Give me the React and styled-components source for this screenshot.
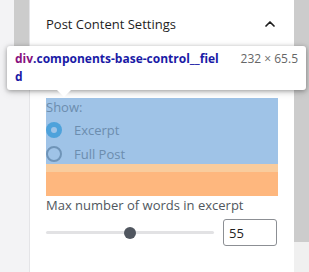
import styled, { createGlobalStyle } from "styled-components"

const Global = createGlobalStyle`
  html, body { margin: 0; padding: 0; }
  body {
    width: 309px;
    height: 272px;
    overflow: hidden;
    font-family: "Open Sans", "Noto Sans", sans-serif;
    background: #f3f3f5;
  }
`

const Page = styled.div`
  position: relative;
  display: flex;
  width: 309px;
  height: 272px;
`

const Gutter = styled.div`
  width: 29px;
  display: flex;
  justify-content: flex-end;
  background: #f3f3f5;
`

const GutterStrip = styled.div`
  width: 15px;
  height: 50px;
  background: #cccccc;
`

const Panel = styled.div`
  flex: 1;
  background: #fff;
  border-left: 1px solid #e4e4e7;
  padding: 0 16px 0 16px;
  display: flex;
  flex-direction: column;
`

const Scrollbar = styled.div`
  width: 15px;
  display: flex;
  flex-direction: column;
`

const ScrollThumb = styled.div`
  height: 242px;
  background: #cccccc;
`

const ScrollTrack = styled.div`
  flex: 1;
  background: #f0f0f0;
`

const Header = styled.div`
  height: 48px;
  display: flex;
  align-items: center;
  justify-content: space-between;
  font-size: 13px;
  color: #1e1e1e;
`

const Spacer = styled.div`
  height: 50px;
`

const Field = styled.div`
  height: 66px;
  background: #9fc3e7;
  display: flex;
  flex-direction: column;
`

const Legend = styled.div`
  height: 20px;
  flex-shrink: 0;
  line-height: 18px;
  font-size: 13px;
  color: #6c8dae;
`

const RadioRow = styled.div`
  height: 24px;
  flex-shrink: 0;
  display: flex;
  align-items: center;
  gap: 12px;
  font-size: 13px;
  color: #6c8dae;
`

const Radio = styled.span`
  width: 16px;
  height: 16px;
  box-sizing: border-box;
  border-radius: 50%;
  border: ${(p) => (p.checked ? "none" : "2px solid #6f94b8")};
  background: ${(p) => (p.checked ? "#4ea2db" : "transparent")};
  display: flex;
  align-items: center;
  justify-content: center;
  &::after {
    content: "";
    display: ${(p) => (p.checked ? "block" : "none")};
    width: 6px;
    height: 6px;
    border-radius: 50%;
    background: #9fc3e7;
  }
`

const Margin = styled.div`
  height: 32px;
  display: flex;
  flex-direction: column;
`

const MarginTop = styled.div`
  height: 8px;
  background: #f9cc9d;
`

const MarginRest = styled.div`
  flex: 1;
  background: #feb77e;
`

const Label = styled.div`
  height: 18px;
  line-height: 18px;
  font-size: 13px;
  color: #50575e;
`

const SliderRow = styled.div`
  margin-top: 5px;
  display: flex;
  align-items: center;
  gap: 9px;
`

const Track = styled.div`
  position: relative;
  width: 168px;
  height: 3px;
  border-radius: 2px;
  background: #e2e2e4;
`

const Thumb = styled.span`
  position: absolute;
  top: 50%;
  width: 12px;
  height: 12px;
  margin: -6px 0 0 -6px;
  border-radius: 50%;
  background: #50565f;
`

const NumberBox = styled.div`
  width: 54px;
  height: 27px;
  box-sizing: border-box;
  border: 1px solid #8c8f94;
  border-radius: 3px;
  padding-left: 5px;
  display: flex;
  align-items: center;
  font-size: 13px;
  color: #1e1e1e;
`

const Tooltip = styled.div`
  position: absolute;
  left: 7px;
  top: 46px;
  width: 299px;
  height: 44px;
  box-sizing: border-box;
  background: #fff;
  border-radius: 3px;
  box-shadow: 0 1px 4px rgba(0, 0, 0, 0.3), 0 2px 8px rgba(0, 0, 0, 0.15);
  padding: 4px 8px 0 8px;
  display: flex;
  justify-content: space-between;
  font-family: "Open Sans", "Noto Sans", sans-serif;
  font-size: 12px;
  line-height: 18px;
  &::after {
    content: "";
    position: absolute;
    left: 50px;
    bottom: -7px;
    border-left: 7px solid transparent;
    border-right: 7px solid transparent;
    border-top: 7px solid #fff;
  }
`

const Selector = styled.div`
  width: 207px;
  font-weight: 700;
  color: #1a1aa6;
  word-break: break-all;
`

const Tag = styled.span`
  color: #881280;
`

const Dimensions = styled.div`
  color: #666;
  white-space: nowrap;
`

const Chevron = () => (
  <svg width="16" height="16" viewBox="0 0 24 24" fill="none" stroke="#1e1e1e" strokeWidth="2.6" strokeLinecap="round" strokeLinejoin="round">
    <path d="M6 15l6-6 6 6" />
  </svg>
)

export default function App() {
  return (
    <Page>
      <Global />
      <Gutter>
        <GutterStrip />
      </Gutter>
      <Panel>
        <Header>
          <span>Post Content Settings</span>
          <Chevron />
        </Header>
        <Spacer />
        <Field>
          <Legend>Show:</Legend>
          <RadioRow>
            <Radio checked />
            Excerpt
          </RadioRow>
          <RadioRow>
            <Radio />
            Full Post
          </RadioRow>
        </Field>
        <Margin>
          <MarginTop />
          <MarginRest />
        </Margin>
        <Label>Max number of words in excerpt</Label>
        <SliderRow>
          <Track>
            <Thumb style={{ left: "50%" }} />
          </Track>
          <NumberBox>55</NumberBox>
        </SliderRow>
      </Panel>
      <Scrollbar>
        <ScrollThumb />
        <ScrollTrack />
      </Scrollbar>
      <Tooltip>
        <Selector>
          <Tag>div</Tag>.components-base-control__field
        </Selector>
        <Dimensions>232 × 65.5</Dimensions>
      </Tooltip>
    </Page>
  )
}
